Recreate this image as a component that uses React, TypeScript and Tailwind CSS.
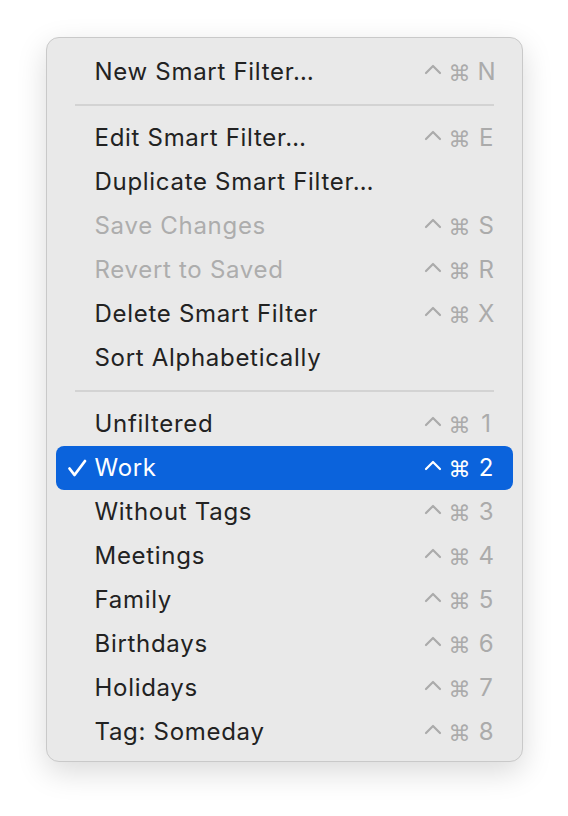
import React from "react";

type Item =
  | { kind: "sep" }
  | { kind: "item"; label: string; key?: string; disabled?: boolean; checked?: boolean };

const items: Item[] = [
  { kind: "item", label: "New Smart Filter…", key: "N" },
  { kind: "sep" },
  { kind: "item", label: "Edit Smart Filter…", key: "E" },
  { kind: "item", label: "Duplicate Smart Filter…" },
  { kind: "item", label: "Save Changes", key: "S", disabled: true },
  { kind: "item", label: "Revert to Saved", key: "R", disabled: true },
  { kind: "item", label: "Delete Smart Filter", key: "X" },
  { kind: "item", label: "Sort Alphabetically" },
  { kind: "sep" },
  { kind: "item", label: "Unfiltered", key: "1" },
  { kind: "item", label: "Work", key: "2", checked: true },
  { kind: "item", label: "Without Tags", key: "3" },
  { kind: "item", label: "Meetings", key: "4" },
  { kind: "item", label: "Family", key: "5" },
  { kind: "item", label: "Birthdays", key: "6" },
  { kind: "item", label: "Holidays", key: "7" },
  { kind: "item", label: "Tag: Someday", key: "8" },
];

function Shortcut({ k, active }: { k: string; active?: boolean }) {
  return (
    <div className={`flex items-center gap-[7px] ${active ? "text-white" : "text-[#ababab]"}`}>
      <svg width="18" height="12" viewBox="0 0 18 12" className="mt-[-6px]">
        <path d="M2 10 L9 3 L16 10" fill="none" stroke="currentColor" strokeWidth="2.2" strokeLinecap="round" strokeLinejoin="round" />
      </svg>
      <span className="w-[22px] text-center text-[22px] translate-y-[1px] font-['DejaVu_Sans',sans-serif]">⌘</span>
      <span className="w-[18px] text-center">{k}</span>
    </div>
  );
}

function Check() {
  return (
    <svg width="20" height="18" viewBox="0 0 20 18" className="ml-[1px]">
      <path d="M2.5 9.5 L7.5 16 L18 2" fill="none" stroke="currentColor" strokeWidth="2.8" strokeLinecap="round" strokeLinejoin="round" />
    </svg>
  );
}

export default function App() {
  return (
    <div className="w-[568px] h-[816px] bg-white flex justify-center pt-[37px] font-['Inter',sans-serif]">
      <div className="w-[477px] h-[725px] bg-[#e9e9e9] rounded-[13px] border border-[#c9c9c9] shadow-[0_10px_30px_rgba(0,0,0,0.15)] pt-[12px] pb-[8px] px-[9px] text-[24px] tracking-[0.7px]">
        {items.map((it, i) =>
          it.kind === "sep" ? (
            <div key={i} className="h-[22px] flex items-center px-[19px]">
              <div className="h-[2px] w-full bg-[#d3d3d3]" />
            </div>
          ) : (
            <div
              key={i}
              className={`h-[44px] flex items-center rounded-[8px] pl-[10px] pr-[17px] ${
                it.checked ? "bg-[#0b63dc] text-white" : it.disabled ? "text-[#adadad]" : "text-[#222222]"
              }`}
            >
              <span className="w-[29px] flex items-center">{it.checked ? <Check /> : null}</span>
              <span className="flex-1">{it.label}</span>
              {it.key && <Shortcut k={it.key} active={it.checked} />}
            </div>
          )
        )}
      </div>
    </div>
  );
}
